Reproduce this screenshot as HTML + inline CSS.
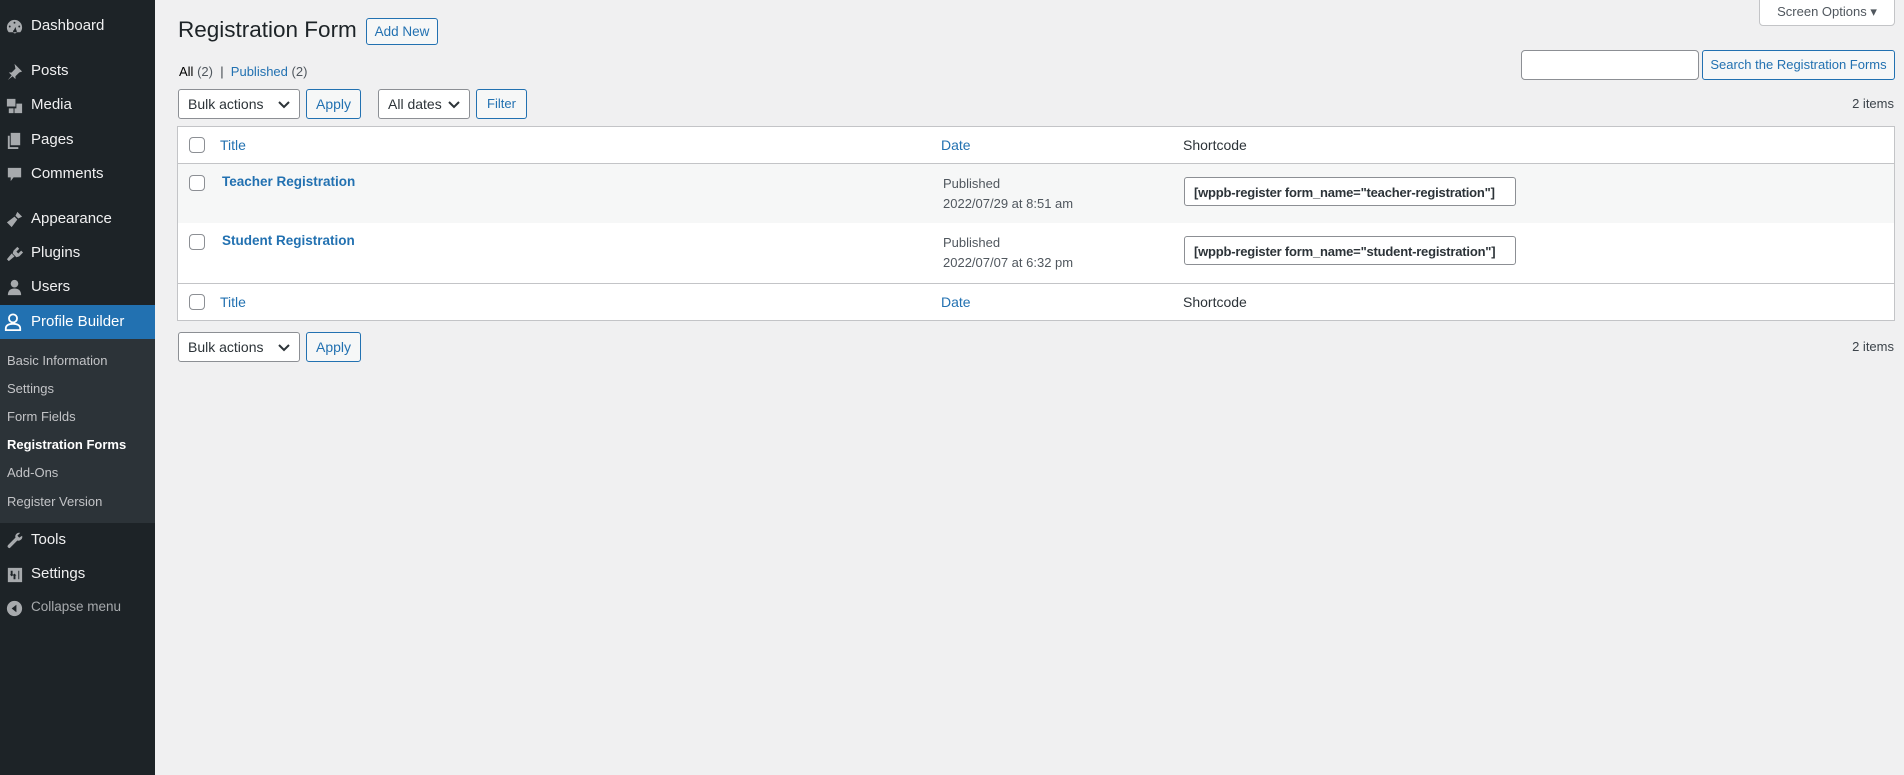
<!DOCTYPE html>
<html><head><meta charset="utf-8"><style>
*{box-sizing:border-box;margin:0;padding:0}
body{width:1904px;height:775px;background:#f0f0f1;font-family:"Liberation Sans",sans-serif;font-size:14px;color:#3c434a;position:relative;overflow:hidden}
.a{position:absolute;white-space:nowrap}
#side{position:absolute;left:0;top:0;width:155px;height:775px;background:#1d2327}
.mi{position:absolute;left:0;width:155px;color:#f0f0f1;font-size:15px;white-space:nowrap}
.mi .t{position:absolute;left:31px}
.ic{position:absolute;left:5px;width:19px;height:19px;fill:#a7aaad}
#sub{position:absolute;left:0;top:339px;width:155px;height:184px;background:#2c3338}
.si{position:absolute;left:7px;color:#c3c4c7;font-size:13px;white-space:nowrap}
.btn{position:absolute;border:1px solid #2271b1;color:#2271b1;background:#f6f7f7;border-radius:3px;text-align:center;font-size:14px;white-space:nowrap}
.sel{position:absolute;border:1px solid #8c8f94;background:#fff;border-radius:3px;font-size:14px;color:#2c3338;padding-left:9px;white-space:nowrap}
.sel svg{position:absolute;right:8px;top:10px}
.cb{position:absolute;width:16px;height:16px;border:1px solid #8c8f94;border-radius:4px;background:#fff}
.lnk{color:#2271b1}
.sc{position:absolute;left:1184px;width:332px;height:29px;border:1px solid #8c8f94;border-radius:3px;background:#fff;font-weight:bold;font-size:13px;color:#2c3338;padding:7px 0 0 9px;white-space:nowrap;letter-spacing:-0.2px}
</style></head><body>
<div id="side">
<div class="mi" style="top:17px"><svg class="ic" viewBox="0 0 20 20" style="top:0"><path d="M10 3a8 8 0 0 0-8 8c0 2 .7 3.7 2 5h12c1.3-1.3 2-3 2-5a8 8 0 0 0-8-8zm0 2a1 1 0 1 1 0 2 1 1 0 0 1 0-2zM5 9a1 1 0 1 1 0 2 1 1 0 0 1 0-2zm10 0a1 1 0 1 1 0 2 1 1 0 0 1 0-2zm-4 1.5L12 14a2 2 0 1 1-2.5-.5z"/></svg><span class="t">Dashboard</span></div>
<div class="mi" style="top:62px"><svg class="ic" viewBox="0 0 20 20" style="top:0"><path d="M10 2l8 8-3 1-4 4 0 3-3-3-5 4 4-5-3-3 3 0 4-4z"/></svg><span class="t">Posts</span></div>
<div class="mi" style="top:96px"><svg class="ic" viewBox="0 0 20 20" style="top:0"><path d="M2 3h9v8H2zM12 8h6v10h-8v-5h2zM4 13h5v5H4z"/></svg><span class="t">Media</span></div>
<div class="mi" style="top:131px"><svg class="ic" viewBox="0 0 20 20" style="top:0"><path d="M6 2h10v13H6zM3 5h2v12h9v2H3z"/></svg><span class="t">Pages</span></div>
<div class="mi" style="top:165px"><svg class="ic" viewBox="0 0 20 20" style="top:0"><path d="M3 3h14v10h-8l-3 4v-4H3z"/></svg><span class="t">Comments</span></div>
<div class="mi" style="top:210px"><svg class="ic" viewBox="0 0 20 20" style="top:0"><path d="M13 2l5 5-4 2-3-3zM10 7l3 3-6 8-5-5z"/></svg><span class="t">Appearance</span></div>
<div class="mi" style="top:244px"><svg class="ic" viewBox="0 0 20 20" style="top:0"><path d="M13 3l2 2-3 3 2 2 3-3 2 2-4 4-3 1-4-4 1-3zM7 10l3 3-6 5-2-2z"/></svg><span class="t">Plugins</span></div>
<div class="mi" style="top:278px"><svg class="ic" viewBox="0 0 20 20" style="top:0"><circle cx="10" cy="6" r="4"/><path d="M3 18c0-5 3-7 7-7s7 2 7 7z"/></svg><span class="t">Users</span></div>
<div style="position:absolute;top:305px;left:0;width:155px;height:34px;background:#2271b1"></div>
<div style="position:absolute;top:314px;left:147px;width:0;height:0;border:8px solid transparent;border-right-color:#f0f0f1"></div>
<div class="mi" style="top:313px;color:#fff"><svg viewBox="0 0 20 20" style="position:absolute;left:4px;top:-1px;width:18px;height:20px" fill="none" stroke="#fff" stroke-width="2"><circle cx="10" cy="6" r="4.5"/><path d="M2 19v-2c0-3 3-5 8-5s8 2 8 5v2z"/></svg><span class="t">Profile Builder</span></div>
<div id="sub"></div>
<div class="si" style="top:353px">Basic Information</div>
<div class="si" style="top:381px">Settings</div>
<div class="si" style="top:409px">Form Fields</div>
<div class="si" style="top:437px;color:#fff;font-weight:bold">Registration Forms</div>
<div class="si" style="top:465px">Add-Ons</div>
<div class="si" style="top:494px">Register Version</div>
<div class="mi" style="top:531px"><svg class="ic" viewBox="0 0 20 20" style="top:0"><path d="M16 2a4 4 0 0 0-5 5L3 15a2 2 0 0 0 2 3l8-8a4 4 0 0 0 5-5l-3 2-2-2z"/></svg><span class="t">Tools</span></div>
<div class="mi" style="top:565px"><svg class="ic" viewBox="0 0 20 20" style="top:0"><path d="M3 3h15v15H3zm3 3v4h-1l2 2 2-2h-1V6zm5 9v-4h1l-2-2-2 2h1v4zm3-9v9h1V6z"/></svg><span class="t">Settings</span></div>
<div class="mi" style="top:599px;color:#a7aaad;font-size:13.5px"><svg class="ic" viewBox="0 0 20 20" style="top:0"><circle cx="10" cy="10" r="8"/><path d="M12 6v8l-5-4z" fill="#1d2327"/></svg><span class="t">Collapse menu</span></div>
</div>

<div class="a" style="left:178px;top:17px;font-size:22.5px;color:#1d2327">Registration Form</div>
<div class="btn" style="left:366px;top:18px;width:72px;height:27px;line-height:25px;font-size:13.5px">Add New</div>
<div class="a" style="left:1759px;top:-1px;width:136px;height:27px;background:#fff;border:1px solid #c3c4c7;border-radius:0 0 4px 4px;font-size:13px;color:#50575e;text-align:center;line-height:24px">Screen Options ▾</div>
<div class="a" style="left:179px;top:64px;font-size:13px"><span style="color:#000">All</span> <span style="color:#50575e">(2)</span> &nbsp;|&nbsp; <span class="lnk">Published</span> <span style="color:#50575e">(2)</span></div>
<div class="a" style="left:1521px;top:50px;width:178px;height:30px;background:#fff;border:1px solid #8c8f94;border-radius:4px"></div>
<div class="btn" style="left:1702px;top:50px;width:193px;height:30px;line-height:28px;font-size:13px">Search the Registration Forms</div>

<div class="sel" style="left:178px;top:89px;width:122px;height:30px;line-height:28px">Bulk actions<svg width="14" height="10" viewBox="0 0 14 10"><path d="M2 2l5 5 5-5" fill="none" stroke="#2c3338" stroke-width="2"/></svg></div>
<div class="btn" style="left:306px;top:89px;width:55px;height:30px;line-height:28px">Apply</div>
<div class="sel" style="left:378px;top:89px;width:92px;height:30px;line-height:28px">All dates<svg width="14" height="10" viewBox="0 0 14 10"><path d="M2 2l5 5 5-5" fill="none" stroke="#2c3338" stroke-width="2"/></svg></div>
<div class="btn" style="left:476px;top:89px;width:51px;height:30px;line-height:28px;font-size:13px">Filter</div>
<div class="a" style="left:1820px;top:96px;width:74px;text-align:right;font-size:13px">2 items</div>

<div class="a" style="left:177px;top:126px;width:1718px;height:195px;background:#fff;border:1px solid #c3c4c7"></div>
<div class="a" style="left:178px;top:163px;width:1716px;height:1px;background:#c3c4c7"></div>
<div class="a" style="left:178px;top:164px;width:1716px;height:59px;background:#f6f7f7"></div>
<div class="a" style="left:178px;top:283px;width:1716px;height:1px;background:#c3c4c7"></div>

<div class="cb" style="left:189px;top:137px"></div>
<div class="a lnk" style="left:220px;top:137px">Title</div>
<div class="a lnk" style="left:941px;top:137px">Date</div>
<div class="a" style="left:1183px;top:137px;color:#2c3338">Shortcode</div>

<div class="cb" style="left:189px;top:175px"></div>
<div class="a lnk" style="left:222px;top:174px;font-weight:bold;font-size:13.5px">Teacher Registration</div>
<div class="a" style="left:943px;top:174px;font-size:13px;color:#50575e;line-height:20px">Published<br>2022/07/29 at 8:51 am</div>
<div class="sc" style="top:177px">[wppb-register form_name="teacher-registration"]</div>

<div class="cb" style="left:189px;top:234px"></div>
<div class="a lnk" style="left:222px;top:233px;font-weight:bold;font-size:13.5px">Student Registration</div>
<div class="a" style="left:943px;top:233px;font-size:13px;color:#50575e;line-height:20px">Published<br>2022/07/07 at 6:32 pm</div>
<div class="sc" style="top:236px">[wppb-register form_name="student-registration"]</div>

<div class="cb" style="left:189px;top:294px"></div>
<div class="a lnk" style="left:220px;top:294px">Title</div>
<div class="a lnk" style="left:941px;top:294px">Date</div>
<div class="a" style="left:1183px;top:294px;color:#2c3338">Shortcode</div>

<div class="sel" style="left:178px;top:332px;width:122px;height:30px;line-height:28px">Bulk actions<svg width="14" height="10" viewBox="0 0 14 10"><path d="M2 2l5 5 5-5" fill="none" stroke="#2c3338" stroke-width="2"/></svg></div>
<div class="btn" style="left:306px;top:332px;width:55px;height:30px;line-height:28px">Apply</div>
<div class="a" style="left:1820px;top:339px;width:74px;text-align:right;font-size:13px">2 items</div>
</body></html>
